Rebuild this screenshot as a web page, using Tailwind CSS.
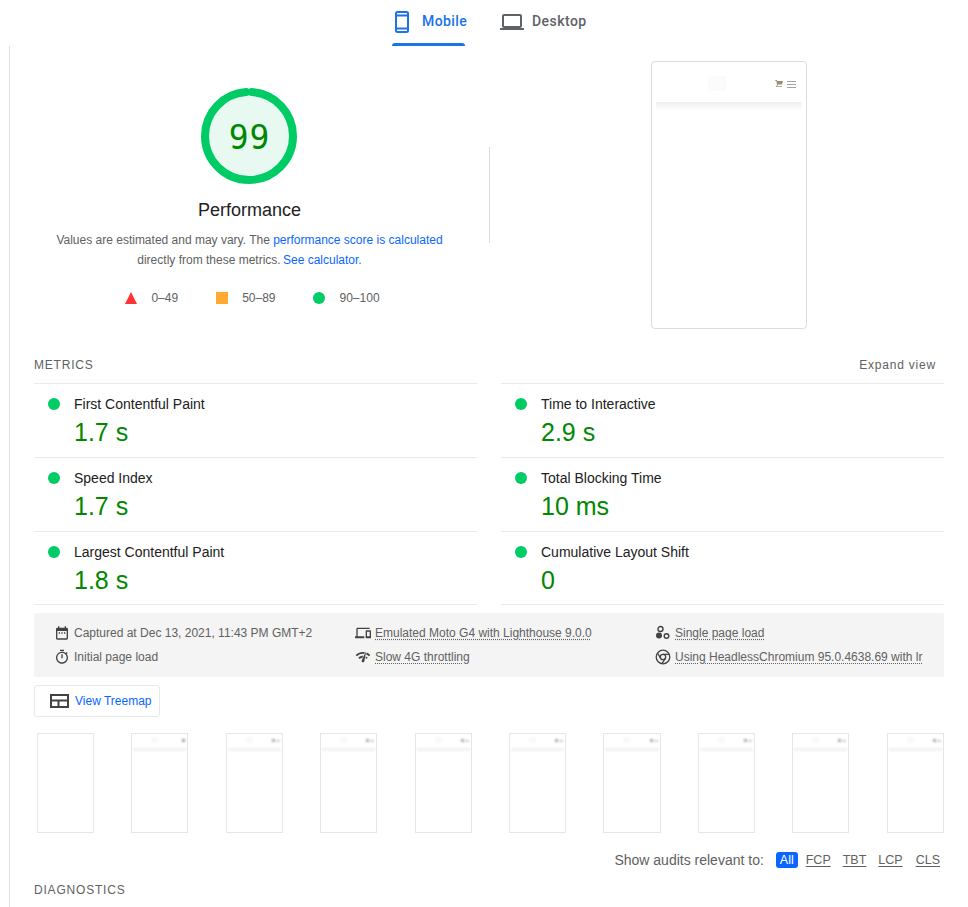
<!DOCTYPE html>
<html lang="en">
<head>
  <meta charset="UTF-8" />
  <meta name="viewport" content="width=device-width, initial-scale=1" />
  <title>PageSpeed Insights</title>
  <script src="https://cdn.jsdelivr.net/npm/@tailwindcss/browser@4"></script>
</head>
<body class="bg-white font-['Liberation_Sans',sans-serif] text-[#212121] overflow-hidden h-[907px]">
  <!-- tabs -->
  <header class="flex h-[46px] pl-[392px]">
    <div class="relative flex items-center w-[73px] h-[46px] pb-[3px]">
      <svg class="ml-[2px] w-[16px] h-[24px] shrink-0" viewBox="0 0 16 24" fill="none" stroke="#1a73e8" stroke-width="2"><rect x="2" y="2" width="12" height="20" rx="1.5"/><path d="M2 5.5h12M2 18.5h12"/></svg>
      <span class="ml-[12px] font-['Roboto',sans-serif] font-medium text-[14px] tracking-[0.4px] text-[#1a73e8] whitespace-nowrap">Mobile</span>
      <div class="absolute left-0 right-0 bottom-0 h-[3px] rounded-t-[3px] bg-[#1a73e8]"></div>
    </div>
    <div class="flex items-center h-[46px] pb-[3px] ml-[35px]">
      <svg class="w-[24px] h-[24px] shrink-0" viewBox="0 0 24 24" fill="#5f6368"><path d="M20 18c1.100 0 2-.9 2-2V6c0-1.100-.9-2-2-2H4c-1.100 0-2 .9-2 2v10c0 1.100.9 2 2 2H0v2h24v-2h-4zM4 6h16v10H4V6z"/></svg>
      <span class="ml-[8px] font-['Roboto',sans-serif] font-medium text-[14px] tracking-[0.45px] text-[#5f6368] whitespace-nowrap">Desktop</span>
    </div>
  </header>

  <main class="ml-[9px] w-[935px] h-[861px] border-l border-[#dfdfdf] pl-[24px]">
    <!-- score + screenshot -->
    <section class="flex h-[299px]">
      <div class="w-[431px] flex flex-col items-center pt-[42px]">
        <div class="relative w-[96px] h-[96px] shrink-0 mr-[1px]">
          <svg class="w-[96px] h-[96px] -rotate-90" viewBox="0 0 96 96">
            <circle cx="48" cy="48" r="44" fill="#e7f9f0"/>
            <circle cx="48" cy="48" r="44" fill="none" stroke="#00cc66" stroke-width="8" stroke-linecap="round" stroke-dasharray="270 6.46" stroke-dashoffset="-3"/>
          </svg>
          <div class="absolute inset-0 flex items-center justify-center pl-[1px] pt-[3px] font-['DejaVu_Sans_Mono',monospace] text-[33px] tracking-[1px] text-[#008800]">99</div>
        </div>
        <h1 class="mt-[14px] text-[18px] leading-[24px]">Performance</h1>
        <p class="mt-[8px] w-[431px] text-center text-[12px] leading-[20px] text-[#616161]">Values are estimated and may vary. The <a href="#" class="text-[#0a66ff]">performance score is calculated</a><br>directly from these metrics. <a href="#" class="text-[#0a66ff] -ml-[1px]">See calculator.</a></p>
        <div class="mt-[18px] flex items-center h-[20px] pl-[6px] text-[12px] text-[#616161]">
          <svg class="w-[12px] h-[12px]" viewBox="0 0 12 12" fill="#ff3333"><path d="M6 0l6 12H0z"/></svg>
          <span class="ml-[14px]">0–49</span>
          <div class="ml-[38px] w-[12px] h-[12px] bg-[#ffaa33]"></div>
          <span class="ml-[14px]">50–89</span>
          <div class="ml-[37px] w-[12px] h-[12px] rounded-full bg-[#00cc66]"></div>
          <span class="ml-[15px]">90–100</span>
        </div>
      </div>
      <div class="ml-[24px] mt-[101px] w-px h-[96px] bg-[#dcdcdc]"></div>
      <div class="relative ml-[161px] mt-[15px] w-[156px] h-[268px] border border-[#dcdcdc] rounded-[4px] overflow-hidden">
        <div class="absolute left-[56px] top-[14px] w-[18px] h-[15px] bg-[#fafbfa]"></div>
        <svg class="absolute left-[123px] top-[18px] w-[8px] h-[7px]" viewBox="0 0 8 7" fill="#a08c70"><path d="M0 0h2l.4 1H8L7 4.400H3L2 6.200h5V7H1l1-2.400L1.200.8H0z"/></svg>
        <div class="absolute left-[135px] top-[19px] w-[9px] h-[7px] border-y border-[#a3a39b] flex items-center"><div class="w-full h-px bg-[#a3a39b]"></div></div>
        <div class="absolute left-[4px] right-[4px] top-[40px] h-[9px] bg-gradient-to-b from-[#f0f0f0] to-white blur-[0.5px]"></div>
      </div>
    </section>

    <!-- metrics -->
    <div class="flex items-center justify-between h-[38px] pt-[1px] pr-[8px] text-[12px] text-[#616161] tracking-[0.8px]">
      <span>METRICS</span>
      <span>Expand view</span>
    </div>
    <div class="grid grid-cols-2 gap-x-[24px] w-[910px]">
      <div class="border-t border-[#ebebeb] h-[74px] flex pl-[14px] pt-[10px]">
        <div class="w-[12px] h-[12px] mt-[4px] rounded-full bg-[#00cc66]"></div>
        <div class="ml-[14px]"><div class="text-[14px] leading-[20px]">First Contentful Paint</div><div class="text-[25px] leading-[34px] mt-[1px] text-[#008800]">1.7 s</div></div>
      </div>
      <div class="border-t border-[#ebebeb] h-[74px] flex pl-[14px] pt-[10px]">
        <div class="w-[12px] h-[12px] mt-[4px] rounded-full bg-[#00cc66]"></div>
        <div class="ml-[14px]"><div class="text-[14px] leading-[20px]">Time to Interactive</div><div class="text-[25px] leading-[34px] mt-[1px] text-[#008800]">2.9 s</div></div>
      </div>
      <div class="border-t border-[#ebebeb] h-[74px] flex pl-[14px] pt-[10px]">
        <div class="w-[12px] h-[12px] mt-[4px] rounded-full bg-[#00cc66]"></div>
        <div class="ml-[14px]"><div class="text-[14px] leading-[20px]">Speed Index</div><div class="text-[25px] leading-[34px] mt-[1px] text-[#008800]">1.7 s</div></div>
      </div>
      <div class="border-t border-[#ebebeb] h-[74px] flex pl-[14px] pt-[10px]">
        <div class="w-[12px] h-[12px] mt-[4px] rounded-full bg-[#00cc66]"></div>
        <div class="ml-[14px]"><div class="text-[14px] leading-[20px]">Total Blocking Time</div><div class="text-[25px] leading-[34px] mt-[1px] text-[#008800]">10 ms</div></div>
      </div>
      <div class="border-y border-[#ebebeb] h-[74px] flex pl-[14px] pt-[10px]">
        <div class="w-[12px] h-[12px] mt-[4px] rounded-full bg-[#00cc66]"></div>
        <div class="ml-[14px]"><div class="text-[14px] leading-[20px]">Largest Contentful Paint</div><div class="text-[25px] leading-[34px] mt-[1px] text-[#008800]">1.8 s</div></div>
      </div>
      <div class="border-y border-[#ebebeb] h-[74px] flex pl-[14px] pt-[10px]">
        <div class="w-[12px] h-[12px] mt-[4px] rounded-full bg-[#00cc66]"></div>
        <div class="ml-[14px]"><div class="text-[14px] leading-[20px]">Cumulative Layout Shift</div><div class="text-[25px] leading-[34px] mt-[1px] text-[#008800]">0</div></div>
      </div>
    </div>

    <!-- run info -->
    <div class="mt-[8px] w-[910px] h-[64px] bg-[#f4f4f4] rounded-[2px] grid grid-cols-[301px_300px_1fr] auto-rows-[24px] content-start pl-[20px] pt-[8px] text-[12px] leading-[24px] text-[#616161]">
      <div class="flex items-center gap-[4px]">
        <svg class="w-[16px] h-[16px]" viewBox="0 0 24 24" fill="#424242"><path d="M19 4h-1V2h-2v2H8V2H6v2H5c-1.100 0-2 .9-2 2v14c0 1.100.9 2 2 2h14c1.100 0 2-.9 2-2V6c0-1.100-.9-2-2-2zm0 16H5V9h14v11zM7 11h2v2H7zm4 0h2v2h-2zm4 0h2v2h-2z"/></svg>
        <span>Captured at Dec 13, 2021, 11:43 PM GMT+2</span>
      </div>
      <div class="flex items-center gap-[4px]">
        <svg class="w-[16px] h-[16px]" viewBox="0 0 24 24" fill="#424242"><path d="M4 6h18V4H4c-1.100 0-2 .9-2 2v11H0v3h14v-3H4V6zm19 2h-6c-.55 0-1 .45-1 1v10c0 .55.45 1 1 1h6c.55 0 1-.45 1-1V9c0-.55-.45-1-1-1zm-1 9h-4v-7h4v7z"/></svg>
        <span class="underline decoration-dotted underline-offset-[2px]">Emulated Moto G4 with Lighthouse 9.0.0</span>
      </div>
      <div class="flex items-center gap-[4px]">
        <svg class="w-[16px] h-[16px]" viewBox="0 0 16 16" fill="#424242"><circle cx="5.500" cy="4" r="2.500" fill="none" stroke="#424242" stroke-width="1.400"/><circle cx="4" cy="10.500" r="3"/><circle cx="11.500" cy="11" r="2.300" fill="none" stroke="#424242" stroke-width="1.400"/></svg>
        <span class="underline decoration-dotted underline-offset-[2px]">Single page load</span>
      </div>
      <div class="flex items-center gap-[4px]">
        <svg class="w-[16px] h-[16px]" viewBox="0 0 24 24" fill="#424242"><path d="M15 1H9v2h6V1zm-4 13h2V8h-2v6zm8.030-6.610l1.420-1.420c-.43-.51-.9-.99-1.410-1.410l-1.420 1.420C16.070 4.740 14.120 4 12 4c-4.970 0-9 4.030-9 9s4.020 9 9 9 9-4.030 9-9c0-2.120-.74-4.070-1.970-5.610zM12 20c-3.870 0-7-3.130-7-7s3.130-7 7-7 7 3.130 7 7-3.130 7-7 7z"/></svg>
        <span>Initial page load</span>
      </div>
      <div class="flex items-center gap-[4px]">
        <svg class="w-[16px] h-[16px]" viewBox="0 0 24 24" fill="#424242"><path d="M15.900 5c-.17 0-.32.09-.41.23l-.07.15-5.180 11.650c-.16.29-.26.61-.26.96 0 1.110.9 2.010 2.010 2.010.96 0 1.770-.68 1.960-1.590l.01-.03L16.400 5.500c0-.28-.22-.5-.5-.5zM1 9l2 2c2.880-2.880 6.790-4.080 10.530-3.620l1.190-2.680C9.890 3.840 4.740 5.270 1 9zm20 2l2-2c-1.640-1.640-3.550-2.820-5.590-3.570l-.53 2.820c1.500.62 2.900 1.530 4.120 2.750zm-4 4l2-2c-.8-.8-1.700-1.420-2.660-1.890l-.55 2.920c.42.27.83.59 1.210.97zM5 13l2 2c1.130-1.130 2.560-1.790 4.030-2l1.280-2.880c-2.630-.08-5.300.87-7.310 2.880z"/></svg>
        <span class="underline decoration-dotted underline-offset-[2px]">Slow 4G throttling</span>
      </div>
      <div class="flex items-center gap-[4px]">
        <svg class="w-[16px] h-[16px]" viewBox="0 0 16 16" fill="none" stroke="#424242" stroke-width="1.300"><circle cx="8" cy="8" r="6.800"/><circle cx="8" cy="8" r="2.700"/><path d="M8 5.300h6.300M5.700 9.400L2.500 4M10.300 9.400L7 14.700"/></svg>
        <span class="underline decoration-dotted underline-offset-[2px] whitespace-nowrap">Using HeadlessChromium 95.0.4638.69 with lr</span>
      </div>
    </div>

    <!-- treemap -->
    <button class="mt-[8px] flex items-center w-[126px] h-[32px] border border-[#e8e8e8] rounded-[3px] pl-[15px]">
      <svg class="w-[19px] h-[14px] shrink-0" viewBox="0 0 19 14" fill="none" stroke="#424242" stroke-width="2"><rect x="1" y="1" width="17" height="12"/><path d="M1 6.500h17M8.500 6.500V13"/></svg>
      <span class="ml-[6px] text-[12px] text-[#0a66ff] whitespace-nowrap">View Treemap</span>
    </button>

    <!-- filmstrip -->
    <div class="mt-[16px] ml-[2.8px] w-[907.2px] flex justify-between">
      <div class="w-[57.2px] h-[100px] border border-[#e6e6e6]"></div>
      <div class="relative w-[57.2px] h-[100px] border border-[#e6e6e6] overflow-hidden"><div class="absolute left-[19px] top-[3px] w-[7px] h-[6px] bg-[#f8faf8] blur-[1px]"></div><div class="absolute right-[2px] top-[5px] w-[3px] h-[3px] bg-[#a0a0a0] blur-[1px]"></div><div class="absolute left-[1px] right-[1px] top-[14px] h-[3px] bg-[#f1f1f1] blur-[1px]"></div></div>
      <div class="relative w-[57.2px] h-[100px] border border-[#e6e6e6] overflow-hidden"><div class="absolute left-[19px] top-[3px] w-[7px] h-[6px] bg-[#f8faf8] blur-[1px]"></div><div class="absolute right-[7px] top-[5px] w-[3px] h-[3px] bg-[#b5a998] blur-[1px]"></div><div class="absolute right-[2px] top-[6px] w-[4px] h-[2px] bg-[#d0d0cc] blur-[1px]"></div><div class="absolute left-[1px] right-[1px] top-[14px] h-[3px] bg-[#f1f1f1] blur-[1px]"></div></div>
      <div class="relative w-[57.2px] h-[100px] border border-[#e6e6e6] overflow-hidden"><div class="absolute left-[19px] top-[3px] w-[7px] h-[6px] bg-[#f8faf8] blur-[1px]"></div><div class="absolute right-[7px] top-[5px] w-[3px] h-[3px] bg-[#b5a998] blur-[1px]"></div><div class="absolute right-[2px] top-[6px] w-[4px] h-[2px] bg-[#d0d0cc] blur-[1px]"></div><div class="absolute left-[1px] right-[1px] top-[14px] h-[3px] bg-[#f1f1f1] blur-[1px]"></div></div>
      <div class="relative w-[57.2px] h-[100px] border border-[#e6e6e6] overflow-hidden"><div class="absolute left-[19px] top-[3px] w-[7px] h-[6px] bg-[#f8faf8] blur-[1px]"></div><div class="absolute right-[7px] top-[5px] w-[3px] h-[3px] bg-[#b5a998] blur-[1px]"></div><div class="absolute right-[2px] top-[6px] w-[4px] h-[2px] bg-[#d0d0cc] blur-[1px]"></div><div class="absolute left-[1px] right-[1px] top-[14px] h-[3px] bg-[#f1f1f1] blur-[1px]"></div></div>
      <div class="relative w-[57.2px] h-[100px] border border-[#e6e6e6] overflow-hidden"><div class="absolute left-[19px] top-[3px] w-[7px] h-[6px] bg-[#f8faf8] blur-[1px]"></div><div class="absolute right-[7px] top-[5px] w-[3px] h-[3px] bg-[#b5a998] blur-[1px]"></div><div class="absolute right-[2px] top-[6px] w-[4px] h-[2px] bg-[#d0d0cc] blur-[1px]"></div><div class="absolute left-[1px] right-[1px] top-[14px] h-[3px] bg-[#f1f1f1] blur-[1px]"></div></div>
      <div class="relative w-[57.2px] h-[100px] border border-[#e6e6e6] overflow-hidden"><div class="absolute left-[19px] top-[3px] w-[7px] h-[6px] bg-[#f8faf8] blur-[1px]"></div><div class="absolute right-[7px] top-[5px] w-[3px] h-[3px] bg-[#b5a998] blur-[1px]"></div><div class="absolute right-[2px] top-[6px] w-[4px] h-[2px] bg-[#d0d0cc] blur-[1px]"></div><div class="absolute left-[1px] right-[1px] top-[14px] h-[3px] bg-[#f1f1f1] blur-[1px]"></div></div>
      <div class="relative w-[57.2px] h-[100px] border border-[#e6e6e6] overflow-hidden"><div class="absolute left-[19px] top-[3px] w-[7px] h-[6px] bg-[#f8faf8] blur-[1px]"></div><div class="absolute right-[7px] top-[5px] w-[3px] h-[3px] bg-[#b5a998] blur-[1px]"></div><div class="absolute right-[2px] top-[6px] w-[4px] h-[2px] bg-[#d0d0cc] blur-[1px]"></div><div class="absolute left-[1px] right-[1px] top-[14px] h-[3px] bg-[#f1f1f1] blur-[1px]"></div></div>
      <div class="relative w-[57.2px] h-[100px] border border-[#e6e6e6] overflow-hidden"><div class="absolute left-[19px] top-[3px] w-[7px] h-[6px] bg-[#f8faf8] blur-[1px]"></div><div class="absolute right-[7px] top-[5px] w-[3px] h-[3px] bg-[#b5a998] blur-[1px]"></div><div class="absolute right-[2px] top-[6px] w-[4px] h-[2px] bg-[#d0d0cc] blur-[1px]"></div><div class="absolute left-[1px] right-[1px] top-[14px] h-[3px] bg-[#f1f1f1] blur-[1px]"></div></div>
      <div class="relative w-[57.2px] h-[100px] border border-[#e6e6e6] overflow-hidden"><div class="absolute left-[19px] top-[3px] w-[7px] h-[6px] bg-[#f8faf8] blur-[1px]"></div><div class="absolute right-[7px] top-[5px] w-[3px] h-[3px] bg-[#b5a998] blur-[1px]"></div><div class="absolute right-[2px] top-[6px] w-[4px] h-[2px] bg-[#d0d0cc] blur-[1px]"></div><div class="absolute left-[1px] right-[1px] top-[14px] h-[3px] bg-[#f1f1f1] blur-[1px]"></div></div>
    </div>

    <!-- audit filter -->
    <div class="mt-[18px] w-[906px] flex items-center justify-end h-[18px] text-[12.5px] text-[#616161]">
      <span class="text-[14px]">Show audits relevant to:</span>
      <span class="ml-[12px] px-[4px] h-[16px] leading-[16px] rounded-[3px] bg-[#0a66ff] text-white">All</span>
      <span class="ml-[8px] underline underline-offset-[2px]">FCP</span>
      <span class="ml-[12px] underline underline-offset-[2px]">TBT</span>
      <span class="ml-[12px] underline underline-offset-[2px]">LCP</span>
      <span class="ml-[13px] underline underline-offset-[2px]">CLS</span>
    </div>
    <div class="mt-[13px] text-[12px] leading-[16px] tracking-[0.8px] text-[#616161]">DIAGNOSTICS</div>
  </main>
</body>
</html>
